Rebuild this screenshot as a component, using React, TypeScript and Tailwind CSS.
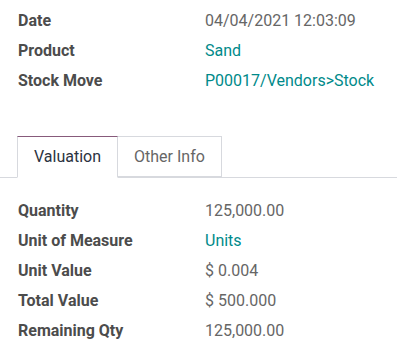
import React from "react";

const top = [
  { label: "Date", value: "04/04/2021 12:03:09", link: false },
  { label: "Product", value: "Sand", link: true },
  { label: "Stock Move", value: "P00017/Vendors>Stock", link: true },
];

const bottom = [
  { label: "Quantity", value: "125,000.00", link: false },
  { label: "Unit of Measure", value: "Units", link: true },
  { label: "Unit Value", value: "$ 0.004", link: false },
  { label: "Total Value", value: "$ 500.000", link: false },
  { label: "Remaining Qty", value: "125,000.00", link: false },
];

function Rows({ rows }: { rows: { label: string; value: string; link: boolean }[] }) {
  return (
    <div className="flex flex-col pl-[18px]">
      {rows.map((r) => (
        <div key={r.label} className="flex h-[30px] items-center">
          <div className="w-[187px] font-bold text-[#4c4c4c]">{r.label}</div>
          <div className={r.link ? "text-[#008a8a]" : "text-[#666666]"}>{r.value}</div>
        </div>
      ))}
    </div>
  );
}

export default function App() {
  return (
    <div
      className="h-[347px] w-[397px] bg-white text-[16px] leading-none"
      style={{ fontFamily: "Roboto, 'Noto Sans', sans-serif" }}
    >
      <div className="pt-[6px]">
        <Rows rows={top} />
      </div>
      <div className="mt-[40px] flex border-b border-[#d7d9de] pl-[17px]">
        <div className="-mb-px flex h-[42px] items-center border border-b-white border-[#d7d9de] border-t-[#875a7b] bg-white px-[16px] text-[#2b3341]">
          Valuation
        </div>
        <div className="flex h-[41px] items-center border border-l-0 border-[#d7d9de] px-[16px] text-[#666666]">
          Other Info
        </div>
      </div>
      <div className="pt-[18px]">
        <Rows rows={bottom} />
      </div>
    </div>
  );
}
